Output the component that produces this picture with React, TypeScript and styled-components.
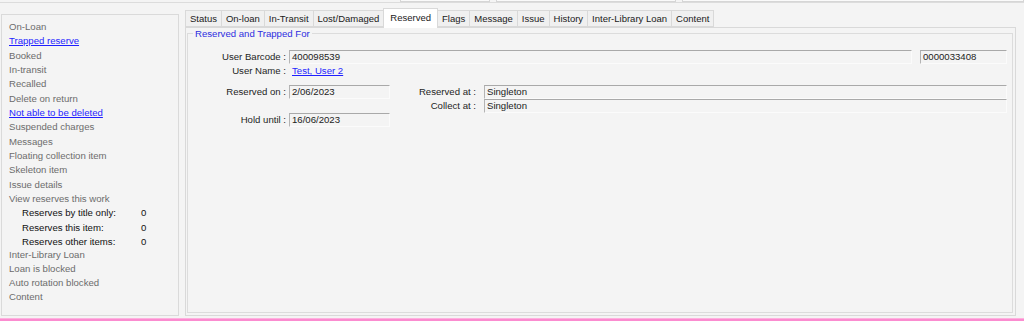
import styled, { createGlobalStyle } from 'styled-components';

const GlobalStyle = createGlobalStyle`
  * { box-sizing: border-box; }
  html, body {
    margin: 0;
    padding: 0;
    background: #f4f4f4;
    overflow: hidden;
  }
  body {
    font-family: 'Liberation Sans', Arial, sans-serif;
    font-size: 9.6px;
    color: #1e1e1e;
  }
`;

const Window = styled.div`
  width: 1024px;
  height: 321px;
  display: flex;
  flex-direction: column;
  background: #f4f4f4;
`;

const TopStrip = styled.div`
  height: 3px;
  display: flex;
  gap: 6px;
  padding-left: 400px;
  border-bottom: 1px solid #dcdcdc;
`;

const Stub = styled.div<{ $w?: number }>`
  height: 2px;
  border: 1px solid #d6d6d6;
  border-top: none;
  background: #fafafa;
  ${(p) => (p.$w ? `width: ${p.$w}px;` : 'flex: 1;')}
`;

const Main = styled.div`
  height: 315px;
  display: flex;
  padding-left: 1px;
`;

/* ---------- left status list ---------- */

const StatusPanel = styled.div`
  width: 178px;
  height: 302px;
  margin-top: 11px;
  border: 1px solid #dadada;
  padding: 5px 0 0 7px;
`;

const StatusItem = styled.div<{ $link?: boolean; $lh?: number }>`
  line-height: ${(p) => p.$lh ?? 14.35}px;
  white-space: nowrap;
  color: ${(p) => (p.$link ? '#1f1fff' : '#6c6c6c')};
  text-decoration: ${(p) => (p.$link ? 'underline' : 'none')};
`;

const SubList = styled.div`
  margin-bottom: -1.6px;
`;

const SubRow = styled.div`
  display: flex;
  padding-left: 13px;
  line-height: 14.35px;
  color: #111;
`;

const SubLabel = styled.span`
  width: 119px;
`;

/* ---------- tabs ---------- */

const TabArea = styled.div`
  width: 831px;
  margin-left: 6px;
  margin-top: 5px;
  display: flex;
  flex-direction: column;
`;

const TabStrip = styled.div`
  height: 20px;
  display: flex;
  align-items: flex-start;
  margin-bottom: -1px;
`;

const Tab = styled.div<{ $active?: boolean }>`
  position: relative;
  height: ${(p) => (p.$active ? 20 : 17)}px;
  margin-top: ${(p) => (p.$active ? 0 : 2)}px;
  padding: 0 ${(p) => (p.$active ? 6 : 4)}px;
  line-height: ${(p) => (p.$active ? 17 : 16)}px;
  font-size: 9.5px;
  border: 1px solid #d9d9d9;
  border-bottom: ${(p) => (p.$active ? 'none' : '1px solid #d9d9d9')};
  background: ${(p) => (p.$active ? '#ffffff' : '#f0f0f0')};
  color: #1a1a1a;
  white-space: nowrap;
  z-index: ${(p) => (p.$active ? 1 : 0)};
  & + & {
    margin-left: -1px;
  }
`;

const Page = styled.div`
  height: 289px;
  border: 1px solid #d9d9d9;
  padding: 0 2px 2px 1px;
`;

const Group = styled.fieldset`
  height: 100%;
  margin: 0;
  padding: 0 5px 0 0;
  border: 1px solid #dcdcdc;
  display: flex;
  flex-direction: column;
`;

const GroupTitle = styled.legend`
  margin-left: 5px;
  padding: 0 2px;
  line-height: 11px;
  color: #2e2ee0;
`;

const FieldRow = styled.div<{ $mt?: number }>`
  display: flex;
  height: 14px;
  margin-top: ${(p) => p.$mt ?? 0}px;
`;

const FieldLabel = styled.div<{ $w: number; $pr?: number }>`
  width: ${(p) => p.$w}px;
  flex-shrink: 0;
  padding-right: ${(p) => p.$pr ?? 0}px;
  text-align: right;
  line-height: 14px;
  color: #242424;
  white-space: nowrap;
`;

const ValueBox = styled.div<{ $w?: number; $gap?: number }>`
  height: 14px;
  margin-left: ${(p) => p.$gap ?? 0}px;
  ${(p) => (p.$w ? `width: ${p.$w}px; flex-shrink: 0;` : 'flex: 1;')}
  border-top: 1px solid #a9a9a9;
  border-left: 1px solid #b4b4b4;
  border-right: 1px solid #fbfbfb;
  border-bottom: 1px solid #fbfbfb;
  background: #f4f4f4;
  padding-left: 2px;
  line-height: 12px;
  color: #222;
  white-space: nowrap;
  overflow: hidden;
`;

const Spacer = styled.div<{ $w: number }>`
  width: ${(p) => p.$w}px;
  flex-shrink: 0;
`;

const UserLink = styled.a`
  margin-left: 6px;
  line-height: 14px;
  color: #1f1fff;
  text-decoration: underline;
`;

const PinkBar = styled.div`
  height: 3px;
  border-top: 1px solid #ffb0de;
  background: #fb8cd0;
`;

const statuses = [
  { label: 'On-Loan' },
  { label: 'Trapped reserve', link: true },
  { label: 'Booked' },
  { label: 'In-transit' },
  { label: 'Recalled' },
  { label: 'Delete on return' },
  { label: 'Not able to be deleted', link: true },
  { label: 'Suspended charges' },
  { label: 'Messages' },
  { label: 'Floating collection item' },
  { label: 'Skeleton item' },
  { label: 'Issue details' },
  { label: 'View reserves this work' },
];

const reserveCounts = [
  { label: 'Reserves by title only:', value: 0 },
  { label: 'Reserves this item:', value: 0 },
  { label: 'Reserves other items:', value: 0 },
];

const trailing = ['Inter-Library Loan', 'Loan is blocked', 'Auto rotation blocked', 'Content'];

const tabs = [
  'Status',
  'On-loan',
  'In-Transit',
  'Lost/Damaged',
  'Reserved',
  'Flags',
  'Message',
  'Issue',
  'History',
  'Inter-Library Loan',
  'Content',
];

const App: React.FC = () => {
  return (
    <Window>
      <GlobalStyle />
      <TopStrip>
        <Stub $w={90} />
        <Stub $w={180} />
        <Stub />
      </TopStrip>

      <Main>
        <StatusPanel>
          {statuses.map((s) => (
            <StatusItem key={s.label} $link={s.link}>
              {s.label}
            </StatusItem>
          ))}
          <SubList>
            {reserveCounts.map((r) => (
              <SubRow key={r.label}>
                <SubLabel>{r.label}</SubLabel>
                <span>{r.value}</span>
              </SubRow>
            ))}
          </SubList>
          {trailing.map((t) => (
            <StatusItem key={t} $lh={14}>
              {t}
            </StatusItem>
          ))}
        </StatusPanel>

        <TabArea>
          <TabStrip>
            {tabs.map((t) => (
              <Tab key={t} $active={t === 'Reserved'}>
                {t}
              </Tab>
            ))}
          </TabStrip>
          <Page>
            <Group>
              <GroupTitle>Reserved and Trapped For</GroupTitle>

              <FieldRow $mt={11}>
                <FieldLabel $w={98}>User Barcode :</FieldLabel>
                <ValueBox $gap={3}>400098539</ValueBox>
                <ValueBox $gap={8} $w={87}>0000033408</ValueBox>
              </FieldRow>
              <FieldRow>
                <FieldLabel $w={98}>User Name :</FieldLabel>
                <UserLink>Test, User 2</UserLink>
              </FieldRow>

              <FieldRow $mt={7}>
                <FieldLabel $w={98}>Reserved on :</FieldLabel>
                <ValueBox $gap={3} $w={101}>2/06/2023</ValueBox>
                <FieldLabel $w={94} $pr={8}>Reserved at :</FieldLabel>
                <ValueBox>Singleton</ValueBox>
              </FieldRow>
              <FieldRow>
                <Spacer $w={202} />
                <FieldLabel $w={94} $pr={8}>Collect at :</FieldLabel>
                <ValueBox>Singleton</ValueBox>
              </FieldRow>
              <FieldRow>
                <FieldLabel $w={98}>Hold until :</FieldLabel>
                <ValueBox $gap={3} $w={101}>16/06/2023</ValueBox>
              </FieldRow>
            </Group>
          </Page>
        </TabArea>
      </Main>

      <PinkBar />
    </Window>
  );
};

export default App;
